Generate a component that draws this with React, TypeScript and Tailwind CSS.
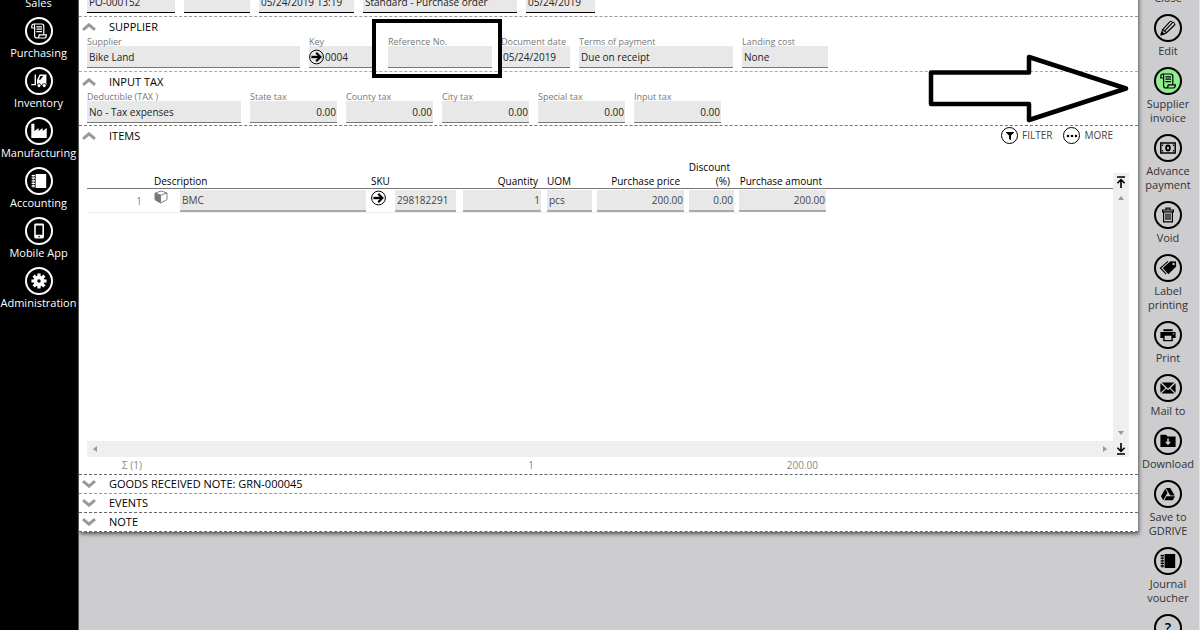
import React from "react";
import { FaGoogleDrive, FaFilter } from "react-icons/fa";

type SvgProps = { className?: string };

function ScrollIcon({ className }: SvgProps) {
  return (
    <svg viewBox="0 0 16 16" className={className ?? "size-4"} fill="none" stroke="currentColor" strokeWidth="1.2">
      <path d="M3.6 5H.8V3.2C.8 1.8 1.6 1 2.8 1H10.8C12.2 1 12.8 1.8 12.8 3.2V11.6" />
      <path d="M2.8 1C3.4 1.4 3.6 2.1 3.6 3.2V12.4C3.6 14.2 4.6 15 6 15H13.4C14.8 15 15.4 13.8 15.4 11.8H8.2C8.2 13.8 7.4 15 6 15" />
      <path d="M5.4 3.8H11M5.4 6.2H11M5.4 8.6H11" />
    </svg>
  );
}

function TrolleyIcon() {
  return (
    <svg viewBox="0 0 16 16" className="size-4" fill="currentColor">
      <path d="M.3 12.2V11H3.6V1.6H5V12.2Z" />
      <path fillRule="evenodd" d="M6 12V7L8.6 1.4H15.4V12ZM9.4 3 7.8 6.8H9.4L12.2 3Z" />
      <circle cx="8" cy="12.6" r="2" stroke="black" strokeWidth=".8" />
      <circle cx="13.2" cy="12.6" r="2" stroke="black" strokeWidth=".8" />
    </svg>
  );
}

function FactoryIcon() {
  return (
    <svg viewBox="0 0 16 16" className="size-4" fill="currentColor">
      <path d="M.3 15V.8H3.4V8L7.6 5V8L11.6 5V8L15.7 5V15Z" />
    </svg>
  );
}

function NotebookIcon() {
  return (
    <svg viewBox="0 0 16 16" className="size-4" fill="currentColor">
      <path d="M4.6 1H15.2V15H4.6Z" />
      <path d="M2.2 1.5V14.8" stroke="currentColor" strokeWidth=".7" />
      <path d="M.6 2.6H4M.6 5.2H4M.6 7.8H4M.6 10.4H4M.6 13H4" stroke="currentColor" strokeWidth="1.3" />
    </svg>
  );
}

function PhoneIcon() {
  return (
    <svg viewBox="0 0 16 16" className="size-4" fill="currentColor">
      <path fillRule="evenodd" d="M4.6.6H11.6Q13 .6 13 2V14Q13 15.4 11.6 15.4H4.6Q3.2 15.4 3.2 14V2Q3.2.6 4.6.6ZM4.8 2.4V11.8H11.4V2.4ZM7.4 13H8.8V14.2H7.4Z" />
    </svg>
  );
}

function GearIcon() {
  return (
    <svg viewBox="0 0 16 16" className="size-4" fill="none" stroke="currentColor">
      <circle cx="8" cy="8" r="3.6" strokeWidth="3.8" />
      <path d="M8 .4V3M8 13V15.6M.4 8H3M13 8H15.6M2.6 2.6 4.6 4.6M11.4 11.4 13.4 13.4M13.4 2.6 11.4 4.6M4.6 11.4 2.6 13.4" strokeWidth="3.2" />
    </svg>
  );
}

function PrinterIcon() {
  return (
    <svg viewBox="0 0 16 16" className="size-4" fill="currentColor">
      <path d="M3.4 2.2H12.6V4.2H3.4Z" />
      <path fillRule="evenodd" d="M.4 5H15.6V11H12.8V14.2H3.2V11H.4ZM4.6 8.8V12.9H11.4V8.8ZM12.8 6.2H14.2V7.2H12.8Z" />
    </svg>
  );
}

function PencilIcon() {
  return (
    <svg viewBox="0 0 16 16" className="size-4" fill="none" stroke="currentColor" strokeWidth="1.1" strokeLinejoin="round">
      <path d="M1 15 2.6 9.6 10 1.6Q11 .8 11.8 1.8M1 15 6.2 13 14.6 5Q15.4 4 14.2 3.4M2.6 9.6Q4 9.6 4.2 11.3Q6 11.4 6.2 13M4.2 11.3 12.8 2.4Q13.6 2 14 3" />
      <path d="M1 15 1.9 12 4 14Z" fill="currentColor" />
    </svg>
  );
}

function BanknoteIcon() {
  return (
    <svg viewBox="0 0 16 16" className="size-4" fill="none" stroke="currentColor">
      <path d="M.8 3H15.2V13H.8Z" strokeWidth="1.5" />
      <path d="M2 5.3H3.2M12.8 5.3H14M2 10.7H3.2M12.8 10.7H14" strokeWidth="1.4" />
      <ellipse cx="8" cy="8" rx="1.9" ry="2.5" strokeWidth="1.8" />
    </svg>
  );
}

function TrashIcon() {
  return (
    <svg viewBox="0 0 16 16" className="size-4" fill="none" stroke="currentColor" strokeWidth="1.2">
      <path d="M6 2.6V1.1H10V2.6M2.6 3H13.4V4.8H2.6ZM3.6 5V14.8H12.4V5M6 6.4V13M8 6.4V13M10 6.4V13" />
    </svg>
  );
}

function TagsIcon() {
  return (
    <svg viewBox="0 0 18 16" className="h-4 w-[18px]" fill="currentColor">
      <path fillRule="evenodd" d="M3.8 8 11.4 1.2 17 1.4 17.2 6.6 9.4 14.2ZM14.6 2.7A1.2 1.2 0 1 0 14.6 5.1A1.2 1.2 0 1 0 14.6 2.7Z" />
      <path d="M9 1.4 1.4 8 7.2 14.2" fill="none" stroke="currentColor" strokeWidth="1.1" />
    </svg>
  );
}

function MailIcon() {
  return (
    <svg viewBox="0 0 16 16" className="size-4" fill="currentColor">
      <path d="M1.6 2.4H14.4L8 8.4ZM.4 3.2 5.4 8 .4 12.8ZM15.6 3.2V12.8L10.6 8ZM1.4 13.6 6.2 8.8 8 10.3 9.8 8.8 14.6 13.6Z" />
    </svg>
  );
}

function FolderIcon() {
  return (
    <svg viewBox="0 0 16 16" className="size-4" fill="currentColor">
      <path fillRule="evenodd" d="M.4 1.8H6L7.6 3.6H15.6V14H.4ZM7.2 5.6V8.8H5L8 12.2 11 8.8H8.8V5.6Z" />
    </svg>
  );
}

function Chevron({ down }: { down?: boolean }) {
  return (
    <svg viewBox="0 0 14 8" className="h-2 w-3.5 shrink-0" fill="none" stroke="#999" strokeWidth="3">
      <path d={down ? "M1 1.2 7 6.2 13 1.2" : "M1 6.8 7 1.8 13 6.8"} />
    </svg>
  );
}

function GoIcon() {
  return (
    <svg viewBox="0 0 16 16" className="size-4 shrink-0" fill="none" stroke="#000">
      <circle cx="7.5" cy="8" r="6.9" strokeWidth="1" />
      <path d="M2.4 8H11" strokeWidth="2.4" />
      <path d="M7.2 3.8 11.4 8 7.2 12.2" strokeWidth="2.2" />
    </svg>
  );
}

function BoxIcon() {
  return (
    <svg viewBox="0 0 14 14" className="size-3.5 shrink-0" fill="none" stroke="#777" strokeWidth=".9">
      <path d="M1 3.2 7 1 13 3 7 5.2Z" fill="#fff" />
      <path d="M1 3.2V9.8L6.6 13V5.4Z" fill="#777" />
      <path d="M13 3V9.6L6.8 13" />
    </svg>
  );
}

function EndArrow({ down }: { down?: boolean }) {
  return (
    <svg viewBox="0 0 10 12" className="h-3 w-2.5" fill="none" stroke="#000" strokeWidth="1.6">
      <path d={down ? "M5 0V8M1.4 4.8 5 8.4 8.6 4.8M1 11H9" : "M5 12V4M1.4 7.2 5 3.6 8.6 7.2M1 1H9"} />
    </svg>
  );
}

const navItems = [
  { label: "Sales", icon: <ScrollIcon /> },
  { label: "Purchasing", icon: <ScrollIcon /> },
  { label: "Inventory", icon: <TrolleyIcon /> },
  { label: "Manufacturing", icon: <FactoryIcon /> },
  { label: "Accounting", icon: <NotebookIcon /> },
  { label: "Mobile App", icon: <PhoneIcon /> },
  { label: "Administration", icon: <GearIcon /> },
];

const actions = [
  { label: "Close", icon: <span className="text-sm">×</span> },
  { label: "Edit", icon: <PencilIcon /> },
  { label: "Supplier\ninvoice", icon: <ScrollIcon />, active: true },
  { label: "Advance\npayment", icon: <BanknoteIcon /> },
  { label: "Void", icon: <TrashIcon /> },
  { label: "Label\nprinting", icon: <TagsIcon /> },
  { label: "Print", icon: <PrinterIcon /> },
  { label: "Mail to", icon: <MailIcon /> },
  { label: "Download", icon: <FolderIcon /> },
  { label: "Save to\nGDRIVE", icon: <FaGoogleDrive className="size-3.5" /> },
  { label: "Journal\nvoucher", icon: <NotebookIcon /> },
  { label: "Help", icon: <span className="text-sm font-semibold">?</span> },
];

type FieldProps = {
  id: string;
  label: string;
  value: string;
  width: string;
  line?: string;
  right?: boolean;
  go?: boolean;
  children?: React.ReactNode;
};

function Field({ id, label, value, width, line = "border-[#777]", right, go, children }: FieldProps) {
  return (
    <div className={`relative shrink-0 ${width}`}>
      <label htmlFor={id} className="block h-2.5 whitespace-nowrap text-[9px] leading-[12px] text-[#777]">
        {label}
      </label>
      <div className={`flex h-[22px] items-center border-b bg-[#e8e8e8] ${line}`}>
        {go && <GoIcon />}
        <input
          id={id}
          readOnly
          defaultValue={value}
          className={`h-full w-full min-w-0 bg-transparent pr-px text-[10px] text-[#222] outline-none ${go ? "" : "pl-0.5"} ${right ? "text-right" : ""}`}
        />
      </div>
      {children}
    </div>
  );
}

function Heading({ title, down }: { title: string; down?: boolean }) {
  return (
    <h2>
      <button type="button" className={`flex items-center gap-[13px] pl-[3px] text-[11px] text-black ${down ? "h-[18px]" : "h-[19px] leading-[19px]"}`}>
        <Chevron down={down} />
        {title}
      </button>
    </h2>
  );
}

function CellInput({ label, value, width, right }: { label: string; value: string; width: string; right?: boolean }) {
  return (
    <input
      aria-label={label}
      readOnly
      defaultValue={value}
      className={`block h-[22px] border-b-2 border-[#aaa] bg-[#e8e8e8] pl-0.5 pr-px text-[10px] text-[#444] outline-none ${width} ${right ? "text-right" : ""}`}
    />
  );
}

function Columns() {
  return (
    <colgroup>
      <col className="w-[67px]" />
      <col className="w-[217px]" />
      <col className="w-[92px]" />
      <col className="w-[84px]" />
      <col className="w-[50px]" />
      <col className="w-[92px]" />
      <col className="w-[50px]" />
      <col className="w-[92px]" />
      <col />
    </colgroup>
  );
}

export default function App() {
  return (
    <div className="flex h-screen items-stretch overflow-hidden bg-[#cdcdd0] font-['Open_Sans','Noto_Sans',sans-serif]">
      <nav className="w-[79px] shrink-0 border-r border-[#555] bg-black pr-px">
        <ul className="-mt-[33px]">
          {navItems.map((n) => (
            <li key={n.label} className="h-[50px]">
              <a href="#" className="flex flex-col items-center text-white">
                <span className="flex size-7 items-center justify-center rounded-full border-2 border-white">{n.icon}</span>
                <span className="whitespace-nowrap text-[11px] leading-[15px]">{n.label}</span>
              </a>
            </li>
          ))}
        </ul>
      </nav>

      <main className="relative -mt-[19px] min-w-0 flex-1 self-start bg-white shadow-[1px_2px_4px_#555]">
        <section className="flex gap-[9px] pb-[3px] pl-2">
          <Field id="number" label="Number" value="PO-000152" width="w-[88px]" line="border-black" />
          <Field id="status" label="Status" value="" width="w-[66px]" line="border-black" />
          <Field id="created" label="Date" value="05/24/2019 13:19" width="w-[95px]" line="border-black" />
          <Field id="type" label="Type" value="Standard - Purchase order" width="w-[154px]" line="border-black" />
          <Field id="due" label="Due date" value="05/24/2019" width="w-[69px]" line="border-black" />
        </section>

        <section className="border-t border-dashed border-[#999] pb-[3px]">
          <Heading title="SUPPLIER" />
          <div className="flex gap-[9px] pl-2">
            <Field id="supplier" label="Supplier" value="Bike Land" width="w-[213px]" />
            <div className="w-[70px] shrink-0">
              <Field id="key" label="Key" value="0004" width="w-[66px]" go />
            </div>
            <Field id="reference" label="Reference No." value="" width="w-[104px]">
              <div className="pointer-events-none absolute -left-4 -top-[17px] z-10 h-[59px] w-[130px] border-4 border-black" />
            </Field>
            <Field id="docdate" label="Document date" value="05/24/2019" width="w-[69px]" />
            <Field id="terms" label="Terms of payment" value="Due on receipt" width="w-[154px]" />
            <Field id="landing" label="Landing cost" value="None" width="w-[86px]" />
          </div>
        </section>

        <section className="border-t border-dashed border-[#aaa] pb-0.5">
          <Heading title="INPUT TAX" />
          <div className="flex gap-[9px] pl-2">
            <Field id="deductible" label="Deductible (TAX )" value="No - Tax expenses" width="w-[154px]" />
            <Field id="state" label="State tax" value="0.00" width="w-[87px]" right />
            <Field id="county" label="County tax" value="0.00" width="w-[87px]" right />
            <Field id="city" label="City tax" value="0.00" width="w-[87px]" right />
            <Field id="special" label="Special tax" value="0.00" width="w-[87px]" right />
            <Field id="input" label="Input tax" value="0.00" width="w-[87px]" right />
          </div>
        </section>

        <section className="border-t border-dashed border-[#777]">
          <div className="flex items-center justify-between pr-[25px]">
            <Heading title="ITEMS" />
            <div className="flex h-[19px] items-center gap-[11px] text-[10px] text-[#444]">
              <button type="button" className="flex items-center gap-1">
                <span className="flex size-[17px] items-center justify-center rounded-full border border-black text-black">
                  <FaFilter className="size-2" />
                </span>
                FILTER
              </button>
              <button type="button" className="flex items-center gap-1">
                <span className="flex size-[17px] items-center justify-center rounded-full border border-black">
                  <svg viewBox="0 0 12 4" className="h-1 w-3" fill="#000">
                    <circle cx="2" cy="2" r="1.3" />
                    <circle cx="6" cy="2" r="1.3" />
                    <circle cx="10" cy="2" r="1.3" />
                  </svg>
                </span>
                MORE
              </button>
            </div>
          </div>

          <div className="flex pl-2 pr-[9px]">
            <div className="flex min-w-0 flex-1 flex-col">
              <div className="min-h-[296px] pt-[15px]">
                <table className="w-full table-fixed border-collapse">
                  <Columns />
                  <thead>
                    <tr className="border-b border-[#777] text-[10px] leading-[14px] text-black [&>th]:p-0 [&>th]:align-bottom [&>th]:font-normal">
                      <th />
                      <th className="text-left">Description</th>
                      <th className="text-left">SKU</th>
                      <th><div className="pr-[9px] text-right">Quantity</div></th>
                      <th className="text-left">UOM</th>
                      <th><div className="pr-[9px] text-right">Purchase price</div></th>
                      <th><div className="flex flex-col items-end pr-[9px]"><span>Discount</span><span>(%)</span></div></th>
                      <th><div className="whitespace-nowrap pr-[9px] text-right">Purchase amount</div></th>
                      <th />
                    </tr>
                  </thead>
                  <tbody>
                    <tr className="[&>td]:p-0 [&>td]:pt-px">
                      <td className="border-b border-[#eee] text-right text-[10px] text-[#888]"><div className="pr-3">1</div></td>
                      <td className="border-b border-[#eee]">
                        <div className="flex items-start">
                          <div className="w-[26px]"><BoxIcon /></div>
                          <CellInput label="Description" value="BMC" width="w-[186px]" />
                        </div>
                      </td>
                      <td className="border-b border-[#eee]">
                        <div className="flex items-start">
                          <div className="w-6"><GoIcon /></div>
                          <CellInput label="SKU" value="298182291" width="w-[61px]" />
                        </div>
                      </td>
                      <td className="border-b border-[#eee]"><CellInput label="Quantity" value="1" width="w-[78px]" right /></td>
                      <td className="border-b border-[#eee]"><CellInput label="UOM" value="pcs" width="w-[45px]" /></td>
                      <td className="border-b border-[#eee]"><CellInput label="Purchase price" value="200.00" width="w-[87px]" right /></td>
                      <td className="border-b border-[#eee]"><CellInput label="Discount" value="0.00" width="w-[45px]" right /></td>
                      <td><CellInput label="Purchase amount" value="200.00" width="w-[87px]" right /></td>
                      <td />
                    </tr>
                  </tbody>
                </table>
              </div>
              <div className="flex h-4 items-center justify-between bg-[#efefef] px-1.5">
                <svg viewBox="0 0 4 6" className="h-1.5 w-1" fill="#999"><path d="M4 0V6L0 3Z" /></svg>
                <svg viewBox="0 0 4 6" className="h-1.5 w-1" fill="#999"><path d="M0 0V6L4 3Z" /></svg>
              </div>
            </div>
            <div className="mt-7 flex w-4 shrink-0 flex-col items-center bg-[#efefef] pb-0.5 pt-[3px]">
              <EndArrow />
              <svg viewBox="0 0 6 4" className="mt-2 h-1 w-1.5" fill="#999"><path d="M0 4H6L3 0Z" /></svg>
              <div className="flex-1" />
              <svg viewBox="0 0 6 4" className="mb-2 h-1 w-1.5" fill="#999"><path d="M0 0H6L3 4Z" /></svg>
              <EndArrow down />
            </div>
          </div>

          <div className="pl-2 pr-[25px]">
            <table className="w-full table-fixed border-collapse text-[10px] leading-[17px] text-[#888]">
              <Columns />
              <tbody>
                <tr className="[&>td]:p-0">
                  <td><div className="pr-3 text-right">Σ (1)</div></td>
                  <td />
                  <td />
                  <td><div className="pr-[13px] text-right">1</div></td>
                  <td />
                  <td />
                  <td />
                  <td><div className="pr-[13px] text-right">200.00</div></td>
                  <td />
                </tr>
              </tbody>
            </table>
          </div>
        </section>

        <section className="border-t border-dashed border-[#666]"><Heading title="GOODS RECEIVED NOTE: GRN-000045" down /></section>
        <section className="border-t border-dashed border-[#999]"><Heading title="EVENTS" down /></section>
        <section className="border-y border-dashed border-[#666]"><Heading title="NOTE" down /></section>

        <svg viewBox="0 0 202 70" className="pointer-events-none absolute right-2 top-[72px] h-[70px] w-[202px]" fill="none" stroke="#000" strokeWidth="4.5" strokeLinejoin="round">
          <path d="M3 19.5H101V4L198 35.5 101 67V51H3Z" />
        </svg>
      </main>

      <aside className="w-[62px] shrink-0 border-r border-[#e4e4e6] pr-px">
        <ul className="-mt-[39px]">
          {actions.map((a) => (
            <li key={a.label} className="pb-[9px]">
              <button type="button" className="flex w-full flex-col items-center gap-0.5 text-black">
                <span className={`flex size-7 items-center justify-center rounded-full border-2 border-black ${a.active ? "bg-[#90ee90]" : ""}`}>
                  {a.icon}
                </span>
                <span className="whitespace-pre text-center text-[11px] leading-[14px] text-[#333]">{a.label}</span>
              </button>
            </li>
          ))}
        </ul>
      </aside>
    </div>
  );
}
